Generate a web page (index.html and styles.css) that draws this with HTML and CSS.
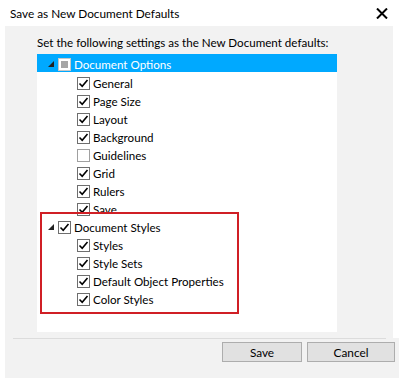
FILE: index.html
```html
<!DOCTYPE html>
<html lang="en">
<head>
  <meta charset="UTF-8">
  <title>Save as New Document Defaults</title>
  <link rel="stylesheet" href="styles.css">
</head>
<body>
  <div class="window">
    <div class="titlebar">
      <span>Save as New Document Defaults</span>
      <svg class="close" width="12" height="11" viewBox="0 0 12 11">
        <path d="M1 0.5 L11 10.5 M11 0.5 L1 10.5" stroke="#000" stroke-width="2" fill="none"/>
      </svg>
    </div>

    <div class="main">
      <div class="label">Set the following settings as the New Document defaults:</div>
      <div class="tree">
        <div class="row parent selected">
          <svg class="expander" width="6" height="6" viewBox="0 0 6 6"><polygon points="6,0 6,6 0,6" fill="#222"/></svg>
          <span class="box partial"><span class="fill"></span></span>
          <span class="text">Document Options</span>
        </div>
        <div class="row child"><span class="box checked"><svg width="11" height="11" viewBox="0 0 11 11"><path d="M1.5 5.5 L4.2 8.2 L9.5 2" stroke="#000" stroke-width="1.6" fill="none"/></svg></span><span class="text">General</span></div>
        <div class="row child"><span class="box checked"><svg width="11" height="11" viewBox="0 0 11 11"><path d="M1.5 5.5 L4.2 8.2 L9.5 2" stroke="#000" stroke-width="1.6" fill="none"/></svg></span><span class="text">Page Size</span></div>
        <div class="row child"><span class="box checked"><svg width="11" height="11" viewBox="0 0 11 11"><path d="M1.5 5.5 L4.2 8.2 L9.5 2" stroke="#000" stroke-width="1.6" fill="none"/></svg></span><span class="text">Layout</span></div>
        <div class="row child"><span class="box checked"><svg width="11" height="11" viewBox="0 0 11 11"><path d="M1.5 5.5 L4.2 8.2 L9.5 2" stroke="#000" stroke-width="1.6" fill="none"/></svg></span><span class="text">Background</span></div>
        <div class="row child"><span class="box"></span><span class="text">Guidelines</span></div>
        <div class="row child"><span class="box checked"><svg width="11" height="11" viewBox="0 0 11 11"><path d="M1.5 5.5 L4.2 8.2 L9.5 2" stroke="#000" stroke-width="1.6" fill="none"/></svg></span><span class="text">Grid</span></div>
        <div class="row child"><span class="box checked"><svg width="11" height="11" viewBox="0 0 11 11"><path d="M1.5 5.5 L4.2 8.2 L9.5 2" stroke="#000" stroke-width="1.6" fill="none"/></svg></span><span class="text">Rulers</span></div>
        <div class="row child"><span class="box checked"><svg width="11" height="11" viewBox="0 0 11 11"><path d="M1.5 5.5 L4.2 8.2 L9.5 2" stroke="#000" stroke-width="1.6" fill="none"/></svg></span><span class="text">Save</span></div>
        <div class="row parent">
          <svg class="expander" width="6" height="6" viewBox="0 0 6 6"><polygon points="6,0 6,6 0,6" fill="#222"/></svg>
          <span class="box checked"><svg width="11" height="11" viewBox="0 0 11 11"><path d="M1.5 5.5 L4.2 8.2 L9.5 2" stroke="#000" stroke-width="1.6" fill="none"/></svg></span>
          <span class="text">Document Styles</span>
        </div>
        <div class="row child"><span class="box checked"><svg width="11" height="11" viewBox="0 0 11 11"><path d="M1.5 5.5 L4.2 8.2 L9.5 2" stroke="#000" stroke-width="1.6" fill="none"/></svg></span><span class="text">Styles</span></div>
        <div class="row child"><span class="box checked"><svg width="11" height="11" viewBox="0 0 11 11"><path d="M1.5 5.5 L4.2 8.2 L9.5 2" stroke="#000" stroke-width="1.6" fill="none"/></svg></span><span class="text">Style Sets</span></div>
        <div class="row child"><span class="box checked"><svg width="11" height="11" viewBox="0 0 11 11"><path d="M1.5 5.5 L4.2 8.2 L9.5 2" stroke="#000" stroke-width="1.6" fill="none"/></svg></span><span class="text">Default Object Properties</span></div>
        <div class="row child"><span class="box checked"><svg width="11" height="11" viewBox="0 0 11 11"><path d="M1.5 5.5 L4.2 8.2 L9.5 2" stroke="#000" stroke-width="1.6" fill="none"/></svg></span><span class="text">Color Styles</span></div>

        <!-- annotation frame drawn over the tree -->
        <div class="highlight-frame"></div>
      </div>
    </div>

    <div class="footer">
      <div class="separator"></div>
      <div class="buttons">
        <button class="btn save">Save</button>
        <button class="btn cancel">Cancel</button>
      </div>
    </div>
  </div>
</body>
</html>
```

FILE: styles.css
```css
body {
  margin: 0;
  background: #fff;
  font-family: Lato, "Liberation Sans", sans-serif;
  font-size: 11.6px;
  color: #000;
}
.window {
  width: 399px;
  height: 382px;
  background: #fff;
  overflow: hidden;
}
.titlebar {
  height: 26px;
  display: flex;
  align-items: center;
  justify-content: space-between;
  padding: 0 11px 0 10px;
  box-sizing: border-box;
  font-size: 11.8px;
}
.close {
  display: block;
  margin-top: 1px;
}
.main {
  margin-left: 5px;
  width: 388px;
  height: 312px;
  box-sizing: border-box;
  background: #f2f2f2;
  padding: 8px 0 0 32px;
}
.label {
  height: 18px;
  line-height: 18px;
  margin-bottom: 2px;
}
.tree {
  position: relative;
  width: 300px;
  height: 278px;
  background: #fff;
  overflow: hidden;
}
.row {
  display: flex;
  align-items: center;
  height: 18px;
  white-space: nowrap;
}
.row.parent {
  padding-left: 11px;
}
.row.child {
  padding-left: 40px;
}
.row.selected {
  background: #00a9ff;
  color: #fff;
  box-sizing: border-box;
  padding-top: 2px;
  margin-bottom: 2px;
}
.expander {
  display: block;
  margin-right: 4px;
}
.box {
  width: 13px;
  height: 13px;
  box-sizing: border-box;
  border: 1px solid #a0a0a0;
  background: #fff;
  display: flex;
  align-items: center;
  justify-content: center;
  flex-shrink: 0;
}
.box.checked {
  border-color: #6e6e6e;
}
.box.partial {
  border-color: #c8c8c8;
}
.box .fill {
  width: 7px;
  height: 7px;
  background: #a6a6a6;
}
.text {
  margin-left: 3px;
}
.highlight-frame {
  position: absolute;
  left: 3px;
  top: 158px;
  width: 199px;
  height: 102px;
  box-sizing: border-box;
  border: 2px solid #d01f25;
}
.footer {
  margin-left: 5px;
  height: 40px;
  background: #f2f2f2;
}
.separator {
  margin: 0 13px 0 8px;
  border-top: 1px solid #dcdcdc;
}
.buttons {
  display: flex;
  justify-content: flex-end;
  gap: 5px;
  padding: 3px 4px 0 0;
}
.btn {
  height: 20px;
  padding: 0;
  border: 1px solid #adadad;
  background: #e1e1e1;
  font-family: Lato, "Liberation Sans", sans-serif;
  font-size: 11.8px;
  color: #000;
}
.btn.save {
  width: 80px;
}
.btn.cancel {
  width: 88px;
}
```
